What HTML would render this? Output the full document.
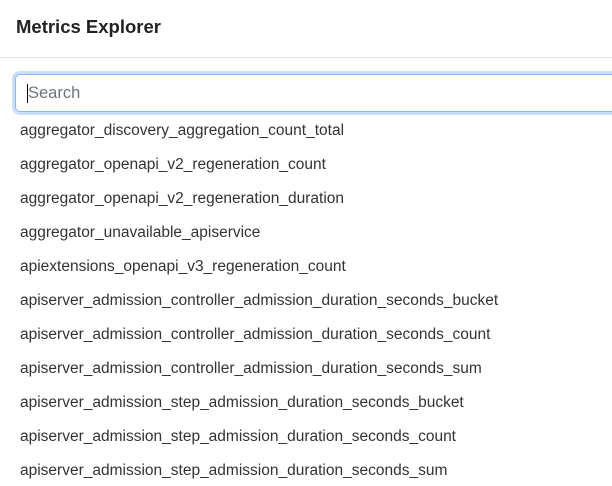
<!DOCTYPE html>
<html><head><style>
body{margin:0;width:612px;height:486px;overflow:hidden;background:#fff;font-family:"Liberation Sans",sans-serif;color:#212529}
.h{position:absolute;left:16px;top:16px;font-size:18.5px;font-weight:bold;color:#222}
.sep{position:absolute;left:0;top:57px;width:612px;height:1px;background:#dee2e6}
.in{position:absolute;left:15px;top:74px;width:620px;height:38px;border:1px solid #86b7fe;border-radius:5px;box-shadow:0 0 0 3px rgba(13,110,253,.22);box-sizing:border-box}
.in span{position:absolute;left:12px;top:9px;font-size:16.5px;color:#6c757d}
.in i{position:absolute;left:11px;top:9px;width:1px;height:19px;background:#000}
.l{position:absolute;left:20px;font-size:15.5px;color:#333}
</style></head><body>
<div class="h">Metrics Explorer</div>
<div class="sep"></div>
<div class="in"><span>Search</span><i></i></div>
<div class="l" style="top:122px">aggregator_discovery_aggregation_count_total</div>
<div class="l" style="top:156px">aggregator_openapi_v2_regeneration_count</div>
<div class="l" style="top:190px">aggregator_openapi_v2_regeneration_duration</div>
<div class="l" style="top:224px">aggregator_unavailable_apiservice</div>
<div class="l" style="top:258px">apiextensions_openapi_v3_regeneration_count</div>
<div class="l" style="top:292px">apiserver_admission_controller_admission_duration_seconds_bucket</div>
<div class="l" style="top:326px">apiserver_admission_controller_admission_duration_seconds_count</div>
<div class="l" style="top:360px">apiserver_admission_controller_admission_duration_seconds_sum</div>
<div class="l" style="top:394px">apiserver_admission_step_admission_duration_seconds_bucket</div>
<div class="l" style="top:428px">apiserver_admission_step_admission_duration_seconds_count</div>
<div class="l" style="top:462px">apiserver_admission_step_admission_duration_seconds_sum</div>
</body></html>
